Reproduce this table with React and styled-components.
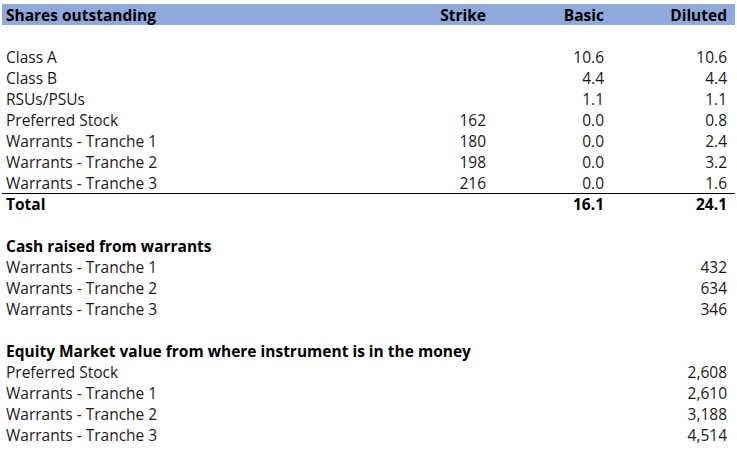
import React from "react";
import styled, { createGlobalStyle } from "styled-components";

const GlobalStyle = createGlobalStyle`
	body {
		margin: 0;
		background: #ffffff;
	}
`;

const Sheet = styled.div`
	margin: 4px 2px 0 2px;
	width: 733px;
	font-family: "Open Sans", "Liberation Sans", sans-serif;
	font-size: 15.5px;
	color: #1a1a1a;
`;

const Row = styled.div`
	box-sizing: border-box;
	display: grid;
	grid-template-columns: 398px 89px 118px 128px;
	height: 21px;
	line-height: ${(p) => (p.$ruled ? "20px" : "22px")};
	font-weight: ${(p) => (p.$bold ? 700 : 400)};
	background: ${(p) => (p.$head ? "#8ea9db" : "transparent")};
	border-top: ${(p) => (p.$ruled ? "1.5px solid #000" : "none")};
	color: ${(p) => (p.$bold ? "#000" : "#1a1a1a")};
	white-space: nowrap;
`;

const Label = styled.div`
	padding-left: 4px;
	overflow: visible;
`;

const Num = styled.div`
	text-align: right;
	padding-right: ${(p) => p.$pad || 3}px;
`;

const shares = [
	["Class A", "", "10.6", "10.6"],
	["Class B", "", "4.4", "4.4"],
	["RSUs/PSUs", "", "1.1", "1.1"],
	["Preferred Stock", "162", "0.0", "0.8"],
	["Warrants - Tranche 1", "180", "0.0", "2.4"],
	["Warrants - Tranche 2", "198", "0.0", "3.2"],
	["Warrants - Tranche 3", "216", "0.0", "1.6"],
];

const cash = [
	["Warrants - Tranche 1", "432"],
	["Warrants - Tranche 2", "634"],
	["Warrants - Tranche 3", "346"],
];

const equity = [
	["Preferred Stock", "2,608"],
	["Warrants - Tranche 1", "2,610"],
	["Warrants - Tranche 2", "3,188"],
	["Warrants - Tranche 3", "4,514"],
];

const Line = ({ cells, bold, head, ruled }) => (
	<Row $bold={bold} $head={head} $ruled={ruled}>
		<Label>{cells[0]}</Label>
		<Num>{cells[1]}</Num>
		<Num>{cells[2]}</Num>
		<Num $pad={8}>{cells[3]}</Num>
	</Row>
);

const App = () => {
	return (
		<>
			<GlobalStyle />
			<Sheet>
				<Line cells={["Shares outstanding", "Strike", "Basic", "Diluted"]} bold head />
				<Line cells={["", "", "", ""]} />
				{shares.map((r) => (
					<Line key={r[0]} cells={r} />
				))}
				<Line cells={["Total", "", "16.1", "24.1"]} bold ruled />
				<Line cells={["", "", "", ""]} />
				<Line cells={["Cash raised from warrants", "", "", ""]} bold />
				{cash.map((r) => (
					<Line key={r[0]} cells={[r[0], "", "", r[1]]} />
				))}
				<Line cells={["", "", "", ""]} />
				<Line cells={["Equity Market value from where instrument is in the money", "", "", ""]} bold />
				{equity.map((r) => (
					<Line key={r[0]} cells={[r[0], "", "", r[1]]} />
				))}
			</Sheet>
		</>
	);
};

export default App;
